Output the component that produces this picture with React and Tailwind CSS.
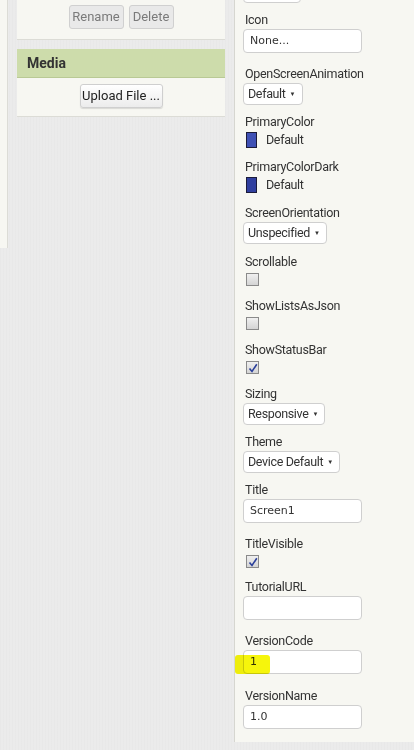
import React from 'react'

const sans = { fontFamily: 'Roboto, "Liberation Sans", sans-serif' }
const boxFont = { fontFamily: '"DejaVu Sans", Verdana, sans-serif' }

function Label({ children }) {
  return (
    <div className="h-[16px] whitespace-nowrap pl-[2px] text-[12.5px] leading-[16px] tracking-[-0.3px] text-[#333]">
      {children}
    </div>
  )
}

function TextBox({ value }) {
  return (
    <div
      className="mt-[1px] flex h-[24px] w-[119px] items-center rounded-[4px] border border-[#cfcfcf] bg-white px-[6px] text-[11px] text-[#333]"
      style={boxFont}
    >
      {value}
    </div>
  )
}

function Dropdown({ value }) {
  return (
    <div className="mt-[1px] flex h-[22px] w-fit items-center gap-[4px] whitespace-nowrap rounded-[4px] border border-[#cfcfcf] bg-white pl-[4px] pr-[6px] text-[12.5px] tracking-[-0.35px] text-[#333]">
      <span>{value}</span>
      <span className="text-[6px] leading-none tracking-normal">▼</span>
    </div>
  )
}

function Check({ checked }) {
  return (
    <div className="ml-[3px] mt-[3px] flex h-[13px] w-[13px] items-center justify-center border border-[#8a8a8a] bg-gradient-to-b from-[#f0f0f0] to-[#d4d4d4]">
      {checked && (
        <svg width="10" height="10" viewBox="0 0 10 10">
          <path d="M1.5 5.5 L4 8.5 L8.8 1.2" fill="none" stroke="#2a3f9a" strokeWidth="1.6" />
        </svg>
      )}
    </div>
  )
}

function ColorSwatch({ color }) {
  return (
    <div className="mt-[2px] flex h-[16px] items-center">
      <div className="ml-[3px] h-[16px] w-[11px] border border-[#1b1b3a]" style={{ backgroundColor: color }} />
      <span className="ml-[9px] text-[12.5px] tracking-[-0.35px] text-[#333]">Default</span>
    </div>
  )
}

export default function App() {
  return (
    <div
      className="flex h-[750px] w-[414px] overflow-hidden bg-[#ebebeb] bg-[repeating-linear-gradient(90deg,rgba(0,0,0,0.012)_0px,rgba(0,0,0,0.012)_1px,transparent_1px,transparent_3px)]"
      style={sans}
    >
      {/* far left sliver panel */}
      <div className="h-[248px] w-[8px] shrink-0 border-r border-[#dcdcd6] bg-[#f7f7f2]" />

      {/* middle column */}
      <div className="ml-[9px] flex w-[208px] shrink-0 flex-col">
        <div className="flex h-[40px] items-start justify-center gap-[5px] border-b border-[#dcdcd6] bg-[#f7f7f2] pt-[5px]">
          <button className="h-[24px] w-[55px] rounded-[3px] border border-[#d0d0d0] bg-[#e9e9e9] text-[13px] text-[#7a7a7a]">
            Rename
          </button>
          <button className="h-[24px] w-[45px] rounded-[3px] border border-[#d0d0d0] bg-[#e9e9e9] text-[13px] text-[#7a7a7a]">
            Delete
          </button>
        </div>

        <div className="mt-[9px] border-b border-[#dcdcd6] bg-[#f7f7f2]">
          <div className="flex h-[29px] items-center border-b border-[#b9c995] bg-[#cddcab] pl-[10px] text-[14px] font-bold text-[#333]">
            Media
          </div>
          <div className="flex h-[38px] items-start justify-center pt-[6px]">
            <button className="h-[24px] w-[83px] rounded-[3px] border border-[#cfcfcf] bg-gradient-to-b from-white to-[#ececec] text-[13px] text-[#222] shadow-[0_1px_1px_rgba(0,0,0,0.12)]">
              Upload File ...
            </button>
          </div>
        </div>
      </div>

      {/* properties panel */}
      <div className="ml-[9px] flex h-[742px] flex-1 flex-col border-l border-[#d6d6d0] bg-[#f7f7f2] pl-[8px]">
        <div className="mt-[-19px] h-[22px] w-[58px] rounded-[4px] border border-[#cfcfcf] bg-white" />

        <div className="mt-[9px]">
          <Label>Icon</Label>
          <TextBox value="None..." />
        </div>
        <div className="mt-[13px]">
          <Label>OpenScreenAnimation</Label>
          <Dropdown value="Default" />
        </div>
        <div className="mt-[9px]">
          <Label>PrimaryColor</Label>
          <ColorSwatch color="#3f51b5" />
        </div>
        <div className="mt-[11px]">
          <Label>PrimaryColorDark</Label>
          <ColorSwatch color="#303f9f" />
        </div>
        <div className="mt-[12px]">
          <Label>ScreenOrientation</Label>
          <Dropdown value="Unspecified" />
        </div>
        <div className="mt-[10px]">
          <Label>Scrollable</Label>
          <Check />
        </div>
        <div className="mt-[12px]">
          <Label>ShowListsAsJson</Label>
          <Check />
        </div>
        <div className="mt-[12px]">
          <Label>ShowStatusBar</Label>
          <Check checked />
        </div>
        <div className="mt-[12px]">
          <Label>Sizing</Label>
          <Dropdown value="Responsive" />
        </div>
        <div className="mt-[9px]">
          <Label>Theme</Label>
          <Dropdown value="Device Default" />
        </div>
        <div className="mt-[9px]">
          <Label>Title</Label>
          <TextBox value="Screen1" />
        </div>
        <div className="mt-[13px]">
          <Label>TitleVisible</Label>
          <Check checked />
        </div>
        <div className="mt-[11px]">
          <Label>TutorialURL</Label>
          <TextBox value="" />
        </div>
        <div className="mt-[13px]">
          <Label>VersionCode</Label>
          <div className="relative">
            <TextBox value="1" />
            <div className="absolute left-[-8px] top-[5px] h-[19px] w-[35px] rounded-[3px] bg-[#f6f50c] mix-blend-multiply" />
          </div>
        </div>
        <div className="mt-[14px]">
          <Label>VersionName</Label>
          <TextBox value="1.0" />
        </div>
      </div>
    </div>
  )
}
